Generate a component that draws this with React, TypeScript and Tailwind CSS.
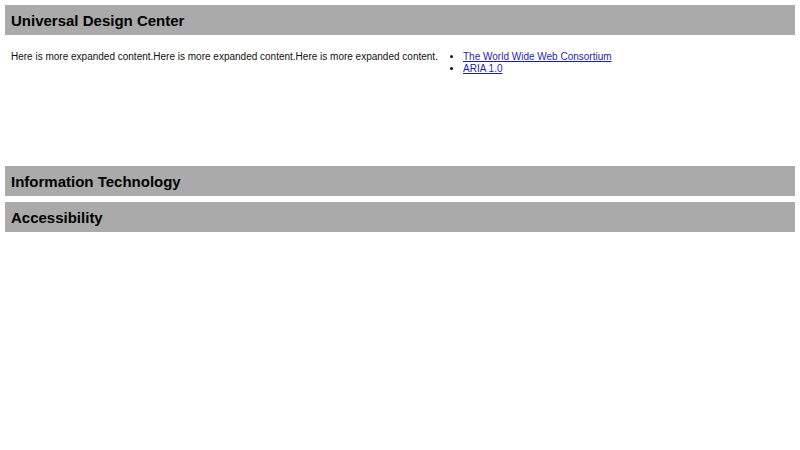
export default function App() {
  const font = { fontFamily: '"Liberation Sans", Arial, sans-serif' };
  return (
    <div className="w-[800px] h-[450px] bg-white px-[5px] pt-[5px]" style={font}>
      <div className="bg-[#aaaaaa] h-[30px] flex items-center px-[6px]">
        <h2 className="text-[15px] font-bold text-black leading-none">Universal Design Center</h2>
      </div>
      <div className="h-[131px] flex items-start pt-[16px] px-[6px] text-[10px] text-[#111111]">
        <p className="leading-[12px] w-[440px] shrink-0">Here is more expanded content.Here is more expanded content.Here is more expanded content.</p>
        <ul className="list-disc pl-[12px] leading-[12px]">
          <li><a href="#" className="text-[#1f1fa8] underline">The World Wide Web Consortium</a></li>
          <li><a href="#" className="text-[#1f1fa8] underline">ARIA 1.0</a></li>
        </ul>
      </div>
      <div className="bg-[#aaaaaa] h-[30px] flex items-center px-[6px]">
        <h2 className="text-[15px] font-bold text-black leading-none">Information Technology</h2>
      </div>
      <div className="h-[6px]" />
      <div className="bg-[#aaaaaa] h-[30px] flex items-center px-[6px]">
        <h2 className="text-[15px] font-bold text-black leading-none">Accessibility</h2>
      </div>
    </div>
  );
}
